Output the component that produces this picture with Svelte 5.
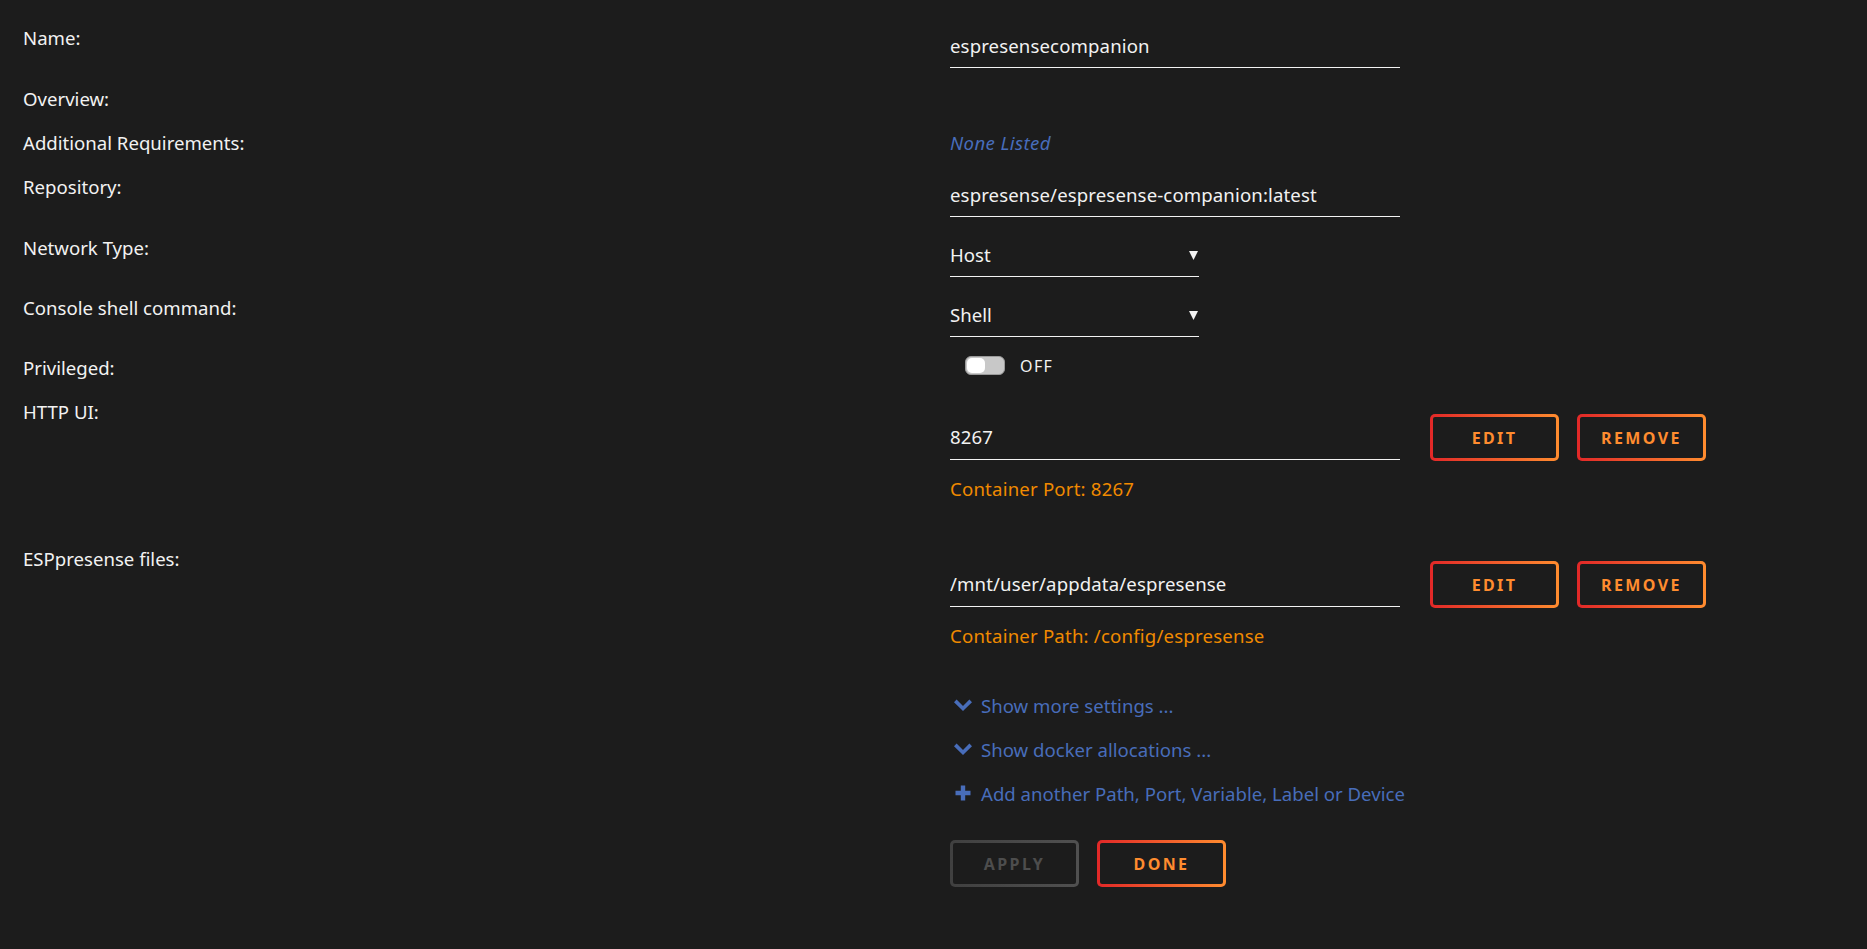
<script>
    let name = "espresensecompanion";
    let repository = "espresense/espresense-companion:latest";

    const mappings = [
        { label: "HTTP UI:", value: "8267", note: "Container Port: 8267" },
        { label: "ESPpresense files:", value: "/mnt/user/appdata/espresense", note: "Container Path: /config/espresense" },
    ];

    const selects = [
        { label: "Network Type:", value: "Host" },
        { label: "Console shell command:", value: "Shell" },
    ];
</script>

<main class="form">
    <div class="row tall">
        <div class="label">Name:</div>
        <div class="value"><input class="field" type="text" bind:value={name} /></div>
    </div>
    <div class="row">
        <div class="label">Overview:</div>
        <div class="value"></div>
    </div>
    <div class="row">
        <div class="label">Additional Requirements:</div>
        <div class="value"><em class="none">None Listed</em></div>
    </div>
    <div class="row tall">
        <div class="label">Repository:</div>
        <div class="value"><input class="field" type="text" bind:value={repository} /></div>
    </div>

    {#each selects as item}
        <div class="row select-row">
            <div class="label">{item.label}</div>
            <div class="value">
                <div class="select">
                    <span>{item.value}</span>
                    <svg class="arrow" width="9" height="10" viewBox="0 0 9 10"><path d="M0 1h9L4.5 10z" fill="#f2f2f2" /></svg>
                </div>
            </div>
        </div>
    {/each}

    <div class="row">
        <div class="label">Privileged:</div>
        <div class="value toggle-cell">
            <span class="toggle"><span class="knob"></span></span>
            <span class="toggle-text">OFF</span>
        </div>
    </div>

    {#each mappings as item}
        <div class="row mapping">
            <div class="label">{item.label}</div>
            <div class="value">
                <div class="mapping-line">
                    <input class="field" type="text" value={item.value} />
                    <button class="btn">Edit</button>
                    <button class="btn">Remove</button>
                </div>
                <div class="note">{item.note}</div>
            </div>
        </div>
    {/each}

    <div class="links">
        <a class="link" href="#more">
            <svg width="18" height="12" viewBox="0 0 18 12"><path d="M0 3.2L2.6 .6 9 7 15.4 .6 18 3.2 9 12z" fill="#486dba" /></svg>
            Show more settings ...
        </a>
        <a class="link" href="#alloc">
            <svg width="18" height="12" viewBox="0 0 18 12"><path d="M0 3.2L2.6 .6 9 7 15.4 .6 18 3.2 9 12z" fill="#486dba" /></svg>
            Show docker allocations ...
        </a>
        <a class="link" href="#add">
            <svg width="18" height="16" viewBox="0 0 18 16"><path d="M9 0.5v15M1.5 8h15" fill="none" stroke="#486dba" stroke-width="4.4" /></svg>
            Add another Path, Port, Variable, Label or Device
        </a>
    </div>

    <div class="actions">
        <button class="btn disabled" disabled>Apply</button>
        <button class="btn">Done</button>
    </div>
</main>

<style>
    :global(body) {
        background: #1c1c1c;
        color: #f2f2f2;
        font-family: "Noto Sans", "Open Sans", sans-serif;
        font-size: 18.6px;
    }

    .form {
        min-height: 949px;
        box-sizing: border-box;
        padding: 16px 0 0 23px;
    }

    .row {
        display: grid;
        grid-template-columns: 927px 1fr;
        height: 44px;
        line-height: 44px;
    }

    .row.tall {
        height: 61px;
    }

    .row.select-row {
        height: 60px;
    }

    .row.mapping {
        height: 147px;
    }

    .none {
        color: #486dba;
        letter-spacing: 0.4px;
    }

    .field {
        display: block;
        box-sizing: border-box;
        width: 450px;
        height: 44px;
        margin-top: 8px;
        padding: 0;
        background: transparent;
        border: 0;
        border-bottom: 1px solid #f2f2f2;
        outline: none;
        color: #f2f2f2;
        font: inherit;
        letter-spacing: 0.12px;
    }

    .select {
        position: relative;
        box-sizing: border-box;
        width: 249px;
        height: 44px;
        margin-top: 7px;
        line-height: 44px;
        border-bottom: 1px solid #f2f2f2;
    }

    .arrow {
        position: absolute;
        right: 1px;
        top: 17px;
    }

    .toggle-cell {
        display: flex;
        align-items: center;
        gap: 15px;
        padding-left: 15px;
        margin-top: -3px;
        height: 44px;
    }

    .toggle {
        display: block;
        box-sizing: border-box;
        width: 40px;
        height: 19px;
        padding: 1px;
        background: #c8c8c8;
        border: 1px solid #9a9a9a;
        border-radius: 6px;
    }

    .knob {
        display: block;
        width: 18px;
        height: 15px;
        background: #fff;
        border-radius: 5px;
    }

    .toggle-text {
        padding-top: 2px;
        font-size: 16px;
        letter-spacing: 1.4px;
    }

    .mapping-line {
        display: flex;
        align-items: center;
        gap: 18px;
        margin-top: 24px;
    }

    .mapping-line .field {
        margin: 0 12px 0 0;
    }

    .note {
        margin-top: 6px;
        color: #f08a00;
        line-height: 44px;
        letter-spacing: 0.2px;
    }

    .btn {
        box-sizing: border-box;
        width: 129px;
        height: 47px;
        padding: 0;
        border: 3px solid transparent;
        border-radius: 5px;
        background: linear-gradient(#1c1c1c, #1c1c1c) padding-box, linear-gradient(90deg, #e22828, #ff8c2f) border-box;
        color: #ff8c2f;
        font-family: inherit;
        font-size: 16px;
        font-weight: 700;
        letter-spacing: 2.4px;
        text-transform: uppercase;
    }

    .btn.disabled {
        background: linear-gradient(#1c1c1c, #1c1c1c) padding-box, linear-gradient(90deg, #404040, #505050) border-box;
        color: #4d4d4d;
    }

    .links {
        display: flex;
        flex-direction: column;
        margin-top: -1px;
        margin-left: 927px;
    }

    .link {
        display: flex;
        align-items: center;
        gap: 9px;
        height: 44px;
        padding-left: 4px;
        color: #486dba;
        text-decoration: none;
    }

    .actions {
        display: flex;
        gap: 18px;
        margin-top: 25px;
        margin-left: 927px;
    }
</style>
